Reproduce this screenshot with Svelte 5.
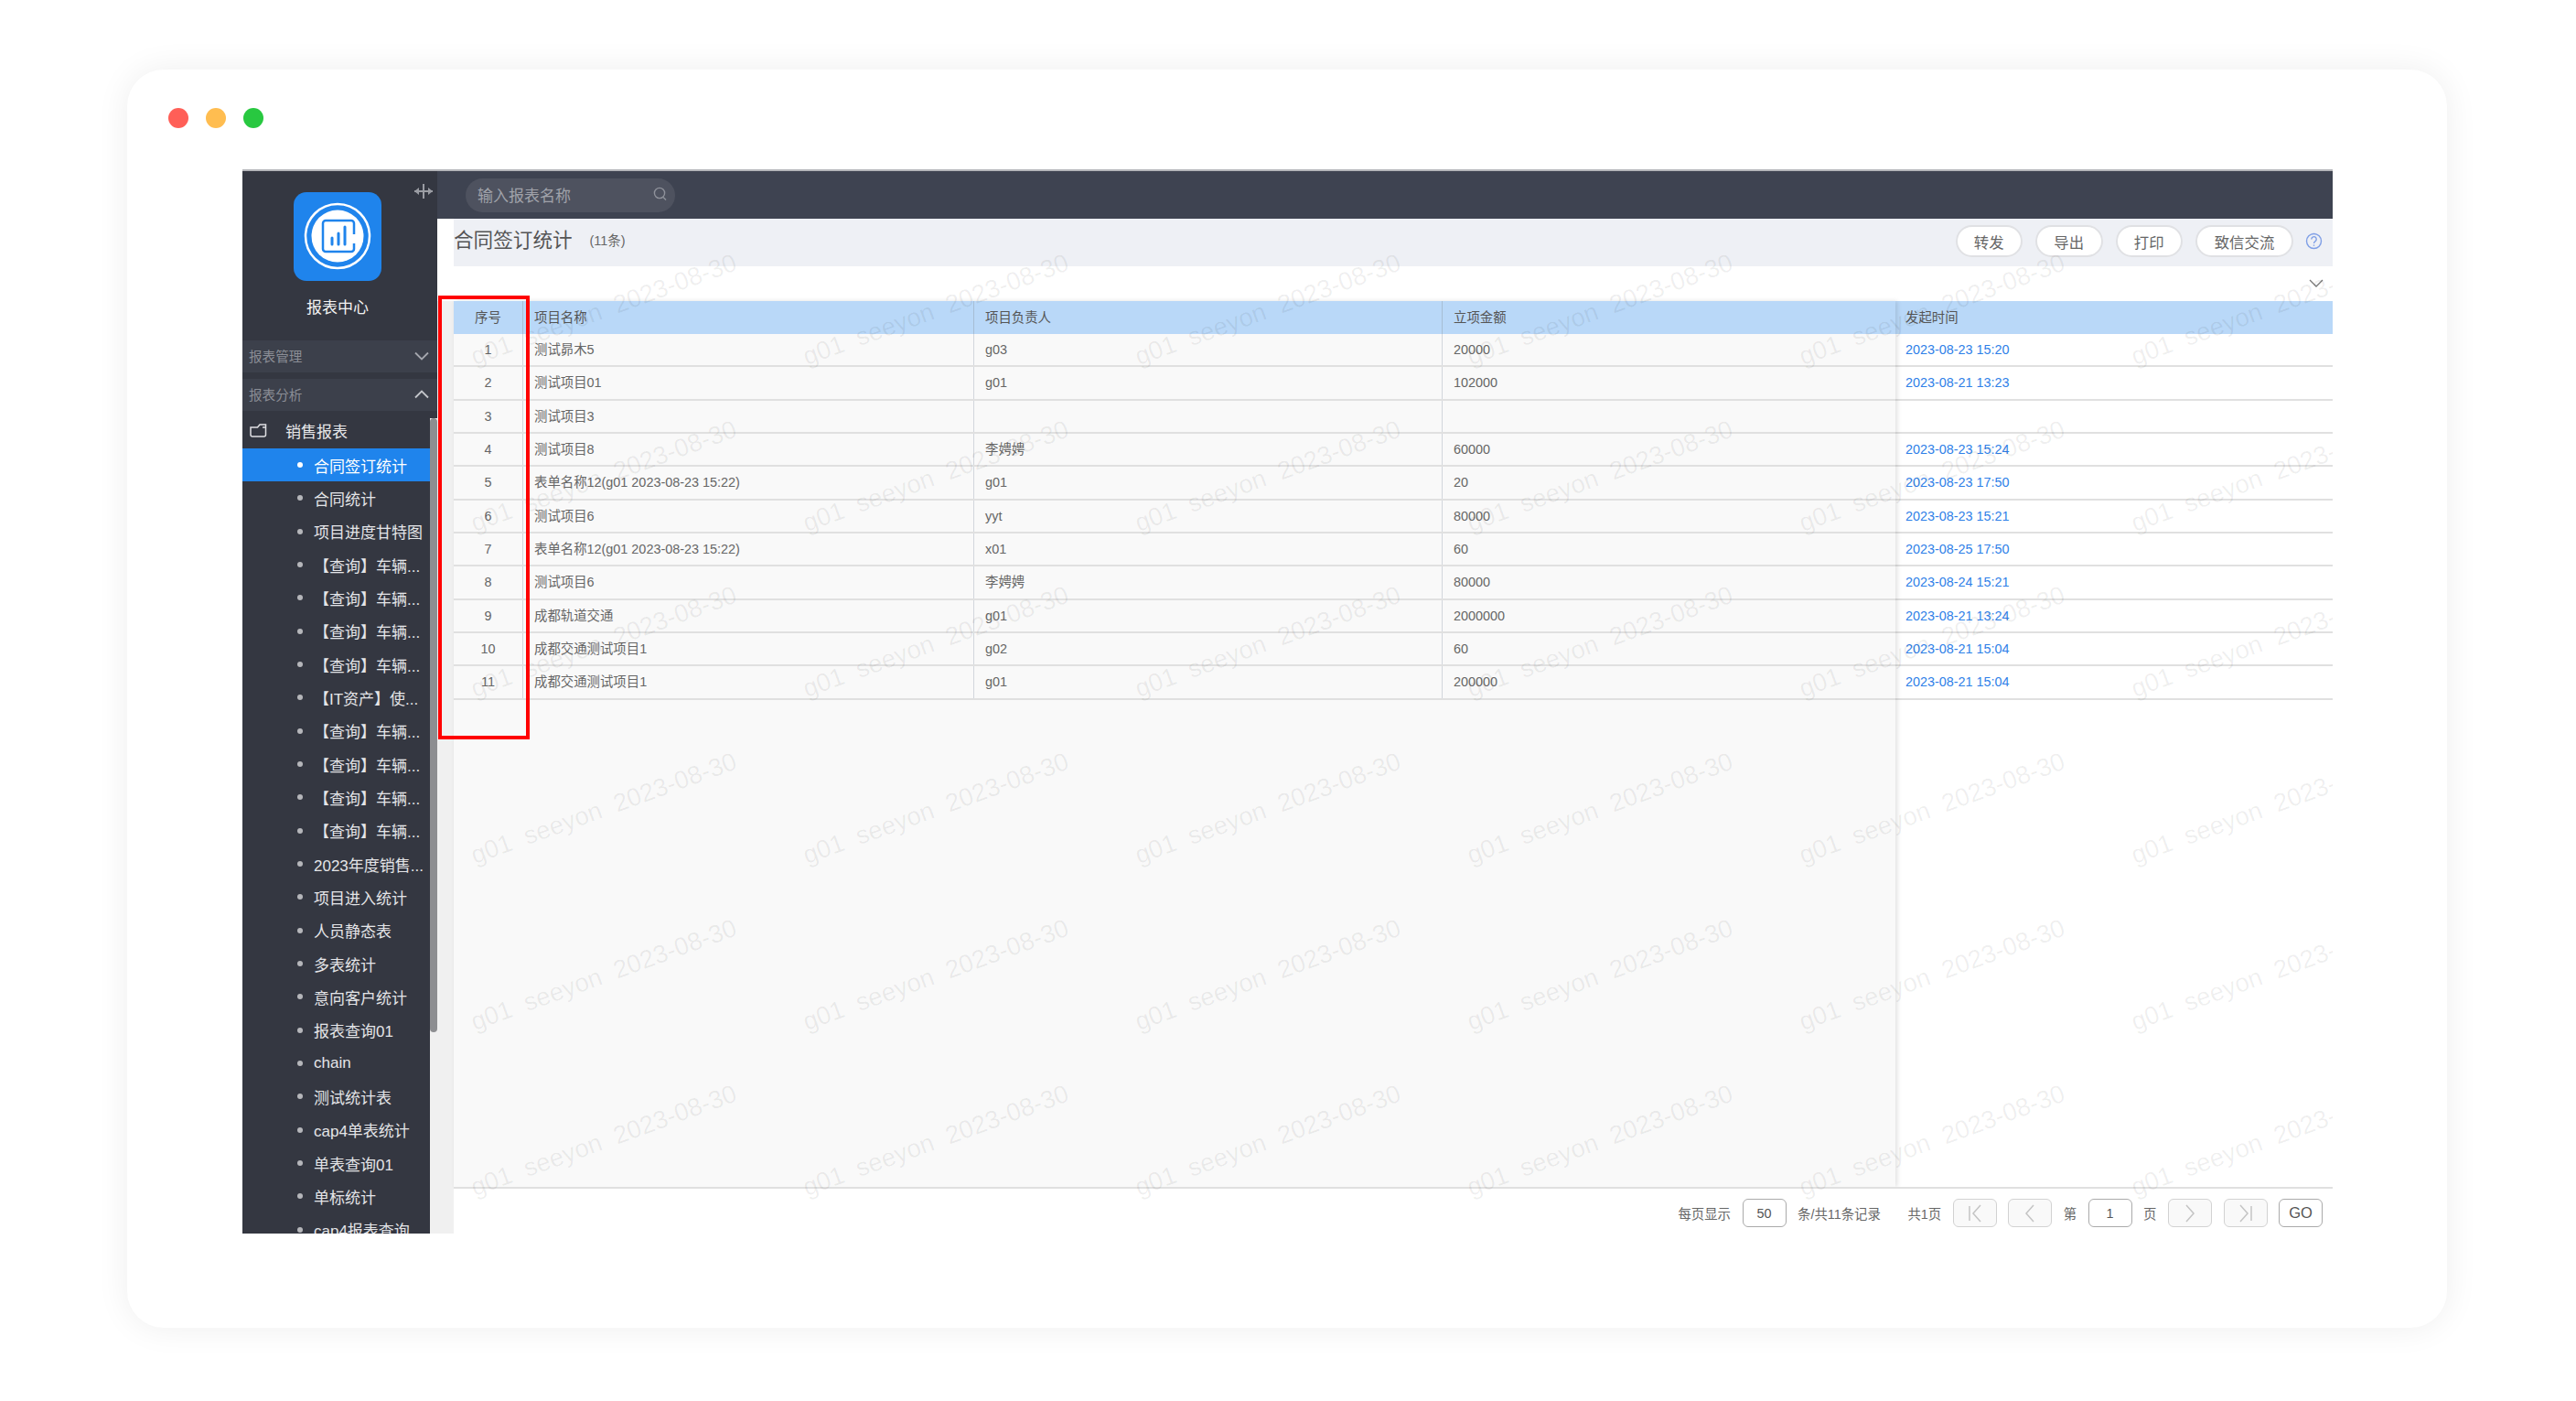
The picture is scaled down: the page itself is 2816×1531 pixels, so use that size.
<script lang="ts">
  const menu = [
    "合同签订统计",
    "合同统计",
    "项目进度甘特图",
    "【查询】车辆...",
    "【查询】车辆...",
    "【查询】车辆...",
    "【查询】车辆...",
    "【IT资产】使...",
    "【查询】车辆...",
    "【查询】车辆...",
    "【查询】车辆...",
    "【查询】车辆...",
    "2023年度销售...",
    "项目进入统计",
    "人员静态表",
    "多表统计",
    "意向客户统计",
    "报表查询01",
    "chain",
    "测试统计表",
    "cap4单表统计",
    "单表查询01",
    "单标统计",
    "cap4报表查询",
  ];

  const rows = [
    ["测试昴木5", "g03", "20000", "2023-08-23 15:20"],
    ["测试项目01", "g01", "102000", "2023-08-21 13:23"],
    ["测试项目3", "", "", ""],
    ["测试项目8", "李娉娉", "60000", "2023-08-23 15:24"],
    ["表单名称12(g01 2023-08-23 15:22)", "g01", "20", "2023-08-23 17:50"],
    ["测试项目6", "yyt", "80000", "2023-08-23 15:21"],
    ["表单名称12(g01 2023-08-23 15:22)", "x01", "60", "2023-08-25 17:50"],
    ["测试项目6", "李娉娉", "80000", "2023-08-24 15:21"],
    ["成都轨道交通", "g01", "2000000", "2023-08-21 13:24"],
    ["成都交通测试项目1", "g02", "60", "2023-08-21 15:04"],
    ["成都交通测试项目1", "g01", "200000", "2023-08-21 15:04"],
  ];

  // watermark grid, offsets are relative to .app
  const marks: { x: number; y: number }[] = [];
  for (let r = 0; r < 6; r++) {
    for (let c = 0; c < 6; c++) {
      marks.push({ x: 521 + c * 363 - 265, y: 401 + r * 181.67 - 185 });
    }
  }
</script>

<div class="page">
  <div class="card">
    <div class="dots">
      <span class="dot red"></span>
      <span class="dot orange"></span>
      <span class="dot green"></span>
    </div>

    <div class="app">
      <aside class="sidebar">
        <svg class="collapse" width="22" height="18" viewBox="0 0 22 18" fill="none" stroke="#9a9ca3" stroke-width="2">
          <path d="M11 1v16M1 9h20"/>
          <path d="M6 5v8L1 9zM16 5v8l5-4z" fill="#9a9ca3" stroke="none"/>
        </svg>
        <svg class="logo" width="96" height="97" viewBox="0 0 96 97">
          <rect width="96" height="97" rx="14" fill="#1f84ec"/>
          <circle cx="48" cy="48" r="35" fill="none" stroke="#fff" stroke-width="2.5"/>
          <circle cx="48" cy="48" r="28.5" fill="#fff"/>
          <path d="M66 46V34a3 3 0 0 0-3-3H35a3 3 0 0 0-3 3v28a3 3 0 0 0 3 3h28a3 3 0 0 0 3-3v-6" fill="none" stroke="#1f84ec" stroke-width="2.5"/>
          <path d="M42 50v7M49 45v12M56 38v19" fill="none" stroke="#1f84ec" stroke-width="3" stroke-linecap="round"/>
        </svg>
        <div class="app-name">报表中心</div>

        <div class="section first">
          <span>报表管理</span>
          <svg width="18" height="10" viewBox="0 0 18 10" fill="none" stroke="#a5a7ae" stroke-width="1.8"><path d="m2 1.5 7 7 7-7"/></svg>
        </div>
        <div class="section">
          <span>报表分析</span>
          <svg width="18" height="10" viewBox="0 0 18 10" fill="none" stroke="#c4c6cb" stroke-width="1.8"><path d="m2 8.5 7-7 7 7"/></svg>
        </div>

        <div class="tree">
          <div class="tree-list">
            <div class="group">
              <svg width="19" height="15" viewBox="0 0 19 15" fill="none" stroke="#dfe0e3" stroke-width="1.5"><path d="M11 1h6.5v11a2 2 0 0 1-2 2H3a2 2 0 0 1-2-2V4h7.5zM14 4h3.5"/></svg>
              <span>销售报表</span>
            </div>
            {#each menu as item, i}
              <div class="item" class:active={i === 0}>
                <span class="bullet"></span>
                <span class="label">{item}</span>
              </div>
            {/each}
          </div>
          <div class="track"><div class="thumb"></div></div>
        </div>
      </aside>

      <main class="main">
        <div class="topbar">
          <div class="search">
            <span>输入报表名称</span>
            <svg width="15" height="16" viewBox="0 0 15 16" fill="none" stroke="#8f929b" stroke-width="1.4"><circle cx="7" cy="7" r="5.6"/><path d="m11 11.4 3 3.2"/></svg>
          </div>
        </div>

        <div class="toolbar">
          <h1>合同签订统计</h1>
          <span class="count">(11条)</span>
          <div class="actions">
            <button class="pill">转发</button>
            <button class="pill">导出</button>
            <button class="pill">打印</button>
            <button class="pill wide">致信交流</button>
            <svg class="help" width="19" height="19" viewBox="0 0 19 19" fill="none" stroke="#7f9fe6" stroke-width="1.4">
              <circle cx="9.5" cy="9.5" r="8"/>
              <path d="M6.8 7.4a2.7 2.7 0 1 1 4.2 2.2c-1 .7-1.5 1.2-1.5 2.4"/>
              <path d="M9.5 13.4v1.4"/>
            </svg>
          </div>
        </div>

        <div class="filter">
          <svg width="16" height="10" viewBox="0 0 16 10" fill="none" stroke="#777" stroke-width="1.3"><path d="m1 1 7 7 7-7"/></svg>
        </div>

        <div class="body">
          <div class="grid">
            <div class="frozen">
              <div class="tr head">
                <div class="td seq">序号</div>
                <div class="td name">项目名称</div>
                <div class="td owner">项目负责人</div>
                <div class="td money">立项金额</div>
              </div>
              {#each rows as row, i}
                <div class="tr">
                  <div class="td seq">{i + 1}</div>
                  <div class="td name">{row[0]}</div>
                  <div class="td owner">{row[1]}</div>
                  <div class="td money">{row[2]}</div>
                </div>
              {/each}
            </div>
            <div class="rest">
              <div class="tr head"><div class="td">发起时间</div></div>
              {#each rows as row}
                <div class="tr"><div class="td date">{row[3]}</div></div>
              {/each}
            </div>
          </div>

          <div class="pager">
            <span>每页显示</span>
            <span class="box size">50</span>
            <span class="records">条/共11条记录</span>
            <span class="pages">共1页</span>
            <span class="btn">
              <svg width="16" height="20" viewBox="0 0 16 20" fill="none" stroke="#c4c4c4" stroke-width="1.5"><path d="M2 2v16M14 1l-8 9 8 9"/></svg>
            </span>
            <span class="btn">
              <svg width="12" height="20" viewBox="0 0 12 20" fill="none" stroke="#c4c4c4" stroke-width="1.5"><path d="m10 1-8 9 8 9"/></svg>
            </span>
            <span>第</span>
            <span class="box">1</span>
            <span>页</span>
            <span class="btn">
              <svg width="12" height="20" viewBox="0 0 12 20" fill="none" stroke="#c4c4c4" stroke-width="1.5"><path d="m2 1 8 9-8 9"/></svg>
            </span>
            <span class="btn">
              <svg width="16" height="20" viewBox="0 0 16 20" fill="none" stroke="#c4c4c4" stroke-width="1.5"><path d="m2 1 8 9-8 9M14 2v16"/></svg>
            </span>
            <span class="box go">GO</span>
          </div>
        </div>
      </main>

      <div class="watermarks">
        {#each marks as m}
          <span class="wm" style="left: {m.x}px; top: {m.y}px">g01&nbsp;&nbsp;seeyon&nbsp;&nbsp;2023-08-30</span>
        {/each}
      </div>
      <div class="highlight"></div>
    </div>
  </div>
</div>

<style>
  :global(body) {
    margin: 0;
    background: #fff;
  }
  .page {
    width: 2816px;
    height: 1531px;
    box-sizing: border-box;
    padding: 76px 141px 80px 139px;
    font-family: "Liberation Sans", "Noto Sans CJK SC", sans-serif;
    font-size: 14.4px;
    color: #666;
    overflow: hidden;
  }
  .card {
    height: 100%;
    background: #fff;
    border-radius: 40px;
    box-shadow: 0 0 36px rgba(0, 0, 0, 0.07);
    padding-top: 42px;
    box-sizing: border-box;
  }
  .dots {
    display: flex;
    gap: 19px;
    padding-left: 45px;
    height: 22px;
  }
  .dot {
    width: 22px;
    height: 22px;
    border-radius: 50%;
  }
  .red { background: #ff5f57; }
  .orange { background: #ffbd50; }
  .green { background: #28c840; }

  .app {
    position: relative;
    display: flex;
    width: 2285px;
    height: 1163px;
    margin: 45px 0 0 126px;
    border-top: 2px solid #b5b6ba;
    box-sizing: border-box;
    overflow: hidden;
  }

  .sidebar {
    position: relative;
    flex: none;
    width: 213px;
    background: #343741;
    display: flex;
    flex-direction: column;
    overflow: hidden;
  }
  .collapse {
    position: absolute;
    top: 13px;
    left: 187px;
  }
  .logo {
    margin: 23px 0 0 56px;
    flex: none;
  }
  .app-name {
    margin-top: 18px;
    padding-right: 5px;
    height: 24px;
    line-height: 24px;
    text-align: center;
    color: #f2f2f2;
    font-size: 17px;
  }
  .section {
    flex: none;
    height: 35px;
    box-sizing: border-box;
    padding: 0 8px 2px 7px;
    display: flex;
    align-items: center;
    justify-content: space-between;
    background: #3c404b;
    color: #8b8e96;
    font-size: 14.6px;
  }
  .section.first {
    margin: 23px 0 7px;
  }
  .tree {
    flex: 1;
    min-height: 0;
    display: flex;
  }
  .tree-list {
    flex: none;
    width: 205px;
  }
  .group {
    height: 41px;
    box-sizing: border-box;
    padding: 2px 0 0 8px;
    display: flex;
    align-items: center;
    gap: 20px;
    color: #e8e8ea;
    font-size: 17px;
  }
  .item {
    display: flex;
    align-items: center;
    height: 36.33px;
    box-sizing: border-box;
    padding-left: 60px;
    color: #e4e5e8;
    font-size: 17px;
  }
  .item.active {
    background: #1f84ec;
    color: #fff;
  }
  .bullet {
    flex: none;
    width: 6px;
    height: 6px;
    margin-right: 12px;
    border-radius: 50%;
    background: #b5b6ba;
  }
  .active .bullet {
    background: #fff;
  }
  .label {
    white-space: nowrap;
  }
  .track {
    flex: 1;
    margin-top: 8px;
    background: #f0f0f0;
  }
  .thumb {
    height: 671px;
    border-radius: 4px;
    background: #8d8e91;
  }

  .main {
    flex: 1;
    min-width: 0;
    display: flex;
    flex-direction: column;
    background: #fff;
  }
  .topbar {
    flex: none;
    height: 52px;
    background: #3e4351;
    display: flex;
    align-items: center;
    padding-left: 31px;
  }
  .search {
    width: 229px;
    height: 37px;
    box-sizing: border-box;
    padding: 0 9px 2px 13px;
    display: flex;
    align-items: center;
    justify-content: space-between;
    border-radius: 19px;
    background: #4e525f;
    color: #a0a2aa;
    font-size: 17px;
  }
  .toolbar {
    flex: none;
    height: 52px;
    box-sizing: border-box;
    padding-bottom: 3px;
    margin-left: 18px;
    display: flex;
    align-items: center;
    background: #eef0f5;
  }
  h1 {
    margin: 0 0 6px;
    font-size: 21.6px;
    font-weight: 400;
    color: #555;
  }
  .count {
    margin: 0 0 4px 19px;
    color: #666;
  }
  .actions {
    margin-left: auto;
    display: flex;
    align-items: center;
    gap: 14px;
    padding-right: 11px;
  }
  .pill {
    width: 73.5px;
    height: 35px;
    padding: 0;
    font: inherit;
    font-size: 16.4px;
    color: #666;
    background: #fff;
    border: 2px solid #e0e1e4;
    border-radius: 18px;
  }
  .pill.wide {
    width: 107px;
  }
  .help {
    margin-left: -1px;
  }
  .filter {
    flex: none;
    height: 38px;
    margin-left: 18px;
    display: flex;
    align-items: center;
    justify-content: flex-end;
    padding: 0 10px 0 0;
    background: #fff;
  }
  .body {
    flex: 1;
    min-height: 0;
    display: flex;
    flex-direction: column;
    border-left: 18px solid #f0f0f0;
  }
  .grid {
    flex: 1;
    min-height: 0;
    display: flex;
  }
  .frozen {
    flex: none;
    width: 1576px;
    background: #f9f9f9;
    box-shadow: 2px 0 5px rgba(0, 0, 0, 0.12);
    position: relative;
  }
  .rest {
    flex: 1;
    min-width: 0;
    background: #fff;
  }
  .tr {
    display: flex;
    height: 36.33px;
    box-sizing: border-box;
    border-bottom: 2px solid #e0e0e0;
  }
  .tr.head {
    height: 36px;
    border-bottom: 0;
    background: #b9d8f8;
    color: #555;
  }
  .td {
    box-sizing: border-box;
    display: flex;
    align-items: center;
    padding-left: 12px;
    line-height: 20px;
    white-space: nowrap;
    border-right: 1px solid #d2d6dc;
  }
  .rest .td {
    border-right: 0;
    padding-left: 11px;
  }
  .head .td {
    border-right-color: #a6bdd4;
  }
  .seq {
    width: 76px;
    padding-left: 0;
    justify-content: center;
  }
  .name { width: 493px; }
  .owner { width: 512px; }
  .money { width: 495px; border-right: 0; }
  .date {
    color: #2f7fe8;
  }
  .pager {
    flex: none;
    height: 51px;
    box-sizing: border-box;
    border-top: 2px solid #e0e0e0;
    display: flex;
    align-items: center;
    justify-content: flex-end;
    padding: 4px 11px 0 0;
    background: #fff;
    gap: 12.5px;
    position: relative;
  }
  .box,
  .btn {
    width: 48px;
    height: 31px;
    box-sizing: border-box;
    display: flex;
    align-items: center;
    justify-content: center;
    border-radius: 6px;
    border: 1.5px solid #aaa;
    background: #fff;
    color: #555;
  }
  .btn {
    border-color: #d2d2d2;
    background: #f9f9f9;
  }
  .go {
    font-size: 16.5px;
  }
  .records {
    margin-right: 17px;
  }

  .watermarks {
    position: absolute;
    left: 231px;
    right: 0;
    top: 52px;
    bottom: 0;
    overflow: hidden;
    pointer-events: none;
  }
  .wm {
    position: absolute;
    margin: -80px 0 0 -231px;
    height: 30px;
    line-height: 30px;
    font-size: 27.6px;
    color: rgba(0, 0, 0, 0.065);
    white-space: nowrap;
    transform: rotate(-20deg);
    transform-origin: 0 100%;
  }
  .highlight {
    position: absolute;
    left: 214px;
    top: 136px;
    width: 100px;
    height: 485px;
    box-sizing: border-box;
    border: 4px solid #f00;
    pointer-events: none;
  }
</style>
